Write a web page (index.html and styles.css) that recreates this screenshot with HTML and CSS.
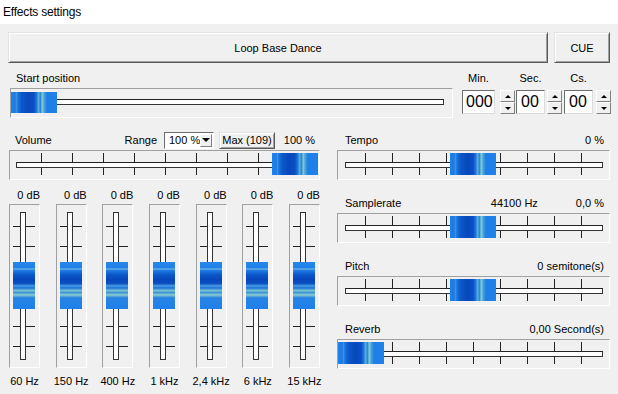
FILE: index.html
```html
<!DOCTYPE html>
<html>
<head>
<meta charset="utf-8">
<title>Effects settings</title>
<link rel="stylesheet" href="styles.css">
</head>
<body>
<div class="titlebar">Effects settings</div>

<div class="top-buttons">
  <button class="btn loop">Loop Base Dance</button>
  <button class="btn cue">CUE</button>
</div>

<div class="start-row">
  <div class="start-col">
    <div class="start-label">Start position</div>
    <div class="slider start-slider">
      <div class="track"></div>
      <div class="thumb t-start"></div>
    </div>
  </div>
  <div class="time">
    <div class="tfield"><div class="tlabel">Min.</div><div class="edit e-min">000</div></div>
    <div class="spin s-min"><div class="spin-btn up"></div><div class="spin-btn down"></div></div>
    <div class="tfield f-sec"><div class="tlabel">Sec.</div><div class="edit e-sec">00</div></div>
    <div class="spin s-sec"><div class="spin-btn up"></div><div class="spin-btn down"></div></div>
    <div class="tfield f-cs"><div class="tlabel">Cs.</div><div class="edit e-cs">00</div></div>
    <div class="spin s-cs"><div class="spin-btn up"></div><div class="spin-btn down"></div></div>
  </div>
</div>

<div class="columns">
  <div class="left-col">
    <div class="hdr vol-hdr">
      <span class="name">Volume</span>
      <span class="range-label">Range</span>
      <div class="combo"><span class="combo-text">100 %</span><span class="combo-btn"></span></div>
      <button class="btn small-btn">Max (109)</button>
      <span class="vol-val">100 %</span>
    </div>
    <div class="slider vol-slider">
      <div class="track"></div>
      <div class="thumb t-vol"></div>
    </div>
    <div class="eq">
      <div class="eq-band"><div class="db">0 dB</div><div class="vslider"><div class="vtrack"></div><div class="vthumb"></div></div><div class="freq">60 Hz</div></div>
      <div class="eq-band"><div class="db">0 dB</div><div class="vslider"><div class="vtrack"></div><div class="vthumb"></div></div><div class="freq">150 Hz</div></div>
      <div class="eq-band"><div class="db">0 dB</div><div class="vslider"><div class="vtrack"></div><div class="vthumb"></div></div><div class="freq">400 Hz</div></div>
      <div class="eq-band"><div class="db">0 dB</div><div class="vslider"><div class="vtrack"></div><div class="vthumb"></div></div><div class="freq">1 kHz</div></div>
      <div class="eq-band"><div class="db">0 dB</div><div class="vslider"><div class="vtrack"></div><div class="vthumb"></div></div><div class="freq">2,4 kHz</div></div>
      <div class="eq-band"><div class="db">0 dB</div><div class="vslider"><div class="vtrack"></div><div class="vthumb"></div></div><div class="freq">6 kHz</div></div>
      <div class="eq-band"><div class="db">0 dB</div><div class="vslider"><div class="vtrack"></div><div class="vthumb"></div></div><div class="freq">15 kHz</div></div>
    </div>
  </div>

  <div class="right-col">
    <div class="section">
      <div class="hdr"><span class="name">Tempo</span><span>0 %</span></div>
      <div class="slider rslider"><div class="track"></div><div class="thumb t-mid"></div></div>
    </div>
    <div class="section">
      <div class="hdr"><span class="name">Samplerate</span><span>44100 Hz</span><span class="pct">0,0 %</span></div>
      <div class="slider rslider"><div class="track"></div><div class="thumb t-mid"></div></div>
    </div>
    <div class="section">
      <div class="hdr"><span class="name">Pitch</span><span>0 semitone(s)</span></div>
      <div class="slider rslider"><div class="track"></div><div class="thumb t-mid"></div></div>
    </div>
    <div class="section">
      <div class="hdr"><span class="name">Reverb</span><span>0,00 Second(s)</span></div>
      <div class="slider rslider"><div class="track"></div><div class="thumb t-left"></div></div>
    </div>
  </div>
</div>
</body>
</html>
```

FILE: styles.css
```css
* { box-sizing: border-box; }
html, body { margin: 0; padding: 0; }
body {
  width: 618px;
  height: 394px;
  overflow: hidden;
  background: #f0f0f0;
  font-family: "Liberation Sans", Arial, sans-serif;
  font-size: 11px;
  color: #000;
}

.titlebar {
  height: 24px;
  background: #fff;
  padding-left: 3px;
  font-size: 12px;
  line-height: 24px;
  letter-spacing: -0.2px;
}

/* classic raised button */
.btn {
  font: inherit;
  color: #000;
  background: #f0f0f0;
  border: 1px solid;
  border-color: #e3e3e3 #5a5a5a #5a5a5a #e3e3e3;
  box-shadow: inset 1px 1px #fff, inset -1px -1px #a0a0a0;
  padding: 0;
  margin: 0;
}

.top-buttons {
  display: flex;
  gap: 6px;
  margin: 8px 0 0 8px;
}
.loop { width: 540px; height: 31px; }
.cue { width: 56px; height: 31px; }

.start-row {
  display: flex;
  margin: 8px 0 0 10px;
}
.start-col { width: 443px; }
.start-label {
  line-height: 14px;
  padding-left: 6px;
  margin-bottom: 3px;
}

/* time edits */
.time {
  display: flex;
  align-items: flex-end;
  margin-left: 9px;
  height: 43px;
}
.tfield {
  display: flex;
  flex-direction: column;
  align-items: center;
}
.tlabel {
  line-height: 14px;
  margin-bottom: 5px;
}
.edit {
  height: 24px;
  background: #fff;
  border: 1px solid;
  border-color: #6e6e6e #dcdcdc #dcdcdc #6e6e6e;
  font-size: 16px;
  line-height: 22px;
  padding-left: 3px;
  white-space: nowrap;
}
.e-min { width: 33px; }
.e-sec { width: 29px; padding-left: 4px; }
.e-cs { width: 29px; padding-left: 4px; }
.s-min { margin-left: 5px; }
.f-sec { margin-left: 1px; }
.s-sec { margin-left: 2px; }
.f-cs { margin-left: 2px; }
.s-cs { margin-left: 3px; }

.spin {
  width: 15px;
  height: 24px;
  display: flex;
  flex-direction: column;
}
.spin-btn {
  flex: 1;
  background: #f0f0f0;
  border: 1px solid;
  border-color: #fff #808080 #808080 #fff;
  display: flex;
  align-items: center;
  justify-content: center;
}
.spin-btn::before {
  content: "";
  border-left: 3px solid transparent;
  border-right: 3px solid transparent;
}
.up::before { border-bottom: 3px solid #000; }
.down::before { border-top: 3px solid #000; }

/* columns */
.columns {
  display: flex;
  gap: 17px;
  margin-top: 13px;
  padding-left: 9px;
}
.left-col { width: 311px; }
.right-col {
  width: 273px;
  display: flex;
  flex-direction: column;
  gap: 14px;
}

.hdr {
  height: 18px;
  display: flex;
  align-items: center;
  padding: 0 6px 0 8px;
  white-space: nowrap;
}
.hdr .name { flex: 1; }
.pct { margin-left: 38px; }

.vol-hdr { padding: 0 5px 0 6px; }
.range-label { margin-right: 7px; }
.combo {
  width: 50px;
  height: 17px;
  background: #fff;
  border: 1px solid;
  border-color: #6e6e6e #fff #fff #6e6e6e;
  display: flex;
  padding: 1px;
}
.combo-text {
  flex: 1;
  padding-left: 3px;
  line-height: 13px;
}
.combo-btn {
  width: 15px;
  background: #f0f0f0;
  border: 1px solid;
  border-color: #fff #808080 #808080 #fff;
  display: flex;
  align-items: center;
  justify-content: center;
}
.combo-btn::before {
  content: "";
  border-left: 4px solid transparent;
  border-right: 4px solid transparent;
  border-top: 4px solid #000;
}
.small-btn {
  width: 56px;
  height: 17px;
  margin-left: 5px;
  line-height: 13px;
}
.vol-val {
  width: 40px;
  text-align: right;
}

/* horizontal sliders */
.slider {
  position: relative;
  height: 30px;
  margin-top: 1px;
  border: 1px solid;
  border-color: #a0a0a0 #fff #fff #a0a0a0;
  display: flex;
  align-items: center;
  background-repeat: no-repeat;
}
.track {
  flex: 1;
  height: 6px;
  border: 1px solid #333;
  border-top-color: #222;
  background: #fff;
}
.start-slider {
  margin-top: 0;
  padding: 0 8px 2px 7px;
}
.vol-slider {
  padding: 0 6px 0 6px;
  background-image: repeating-linear-gradient(to right, #222 0 1px, transparent 1px 31px);
  background-size: 218px 22px;
  background-position: 31px 2px;
}
.rslider {
  padding: 0 6px 0 7px;
  background-image: repeating-linear-gradient(to right, #222 0 1px, transparent 1px 27px);
  background-size: 217px 22px;
  background-position: 27px 2px;
}

.thumb {
  position: absolute;
  top: 2px;
  width: 46px;
  height: 22px;
  background: linear-gradient(to right,
    #1f82ea 0%, #1c7ae4 9%, #3a92e2 12%, #1a74e0 15%,
    #0c58c8 23%, #0848bc 38%, #0a4fc4 50%, #1f78dc 56%,
    #5aaed8 60%, #2a86dc 64%, #86cdca 68%, #4aa2dc 72%,
    #1e7ee6 78%, #1f82ea 100%);
}
.t-start { left: 0; top: 3px; height: 21px; }
.t-vol { left: 262px; }
.t-mid { left: 112px; }
.t-left { left: 0; }

/* equalizer */
.eq {
  display: flex;
  justify-content: space-between;
  margin-top: 8px;
}
.eq-band {
  width: 31px;
  display: flex;
  flex-direction: column;
}
.db {
  line-height: 14px;
  text-align: right;
  white-space: nowrap;
  margin-bottom: 2px;
}
.vslider {
  position: relative;
  height: 164px;
  border: 1px solid;
  border-color: #a0a0a0 #fff #fff #a0a0a0;
  padding: 7px 0 7px 10px;
  display: flex;
  background-image: repeating-linear-gradient(to bottom, #222 0 1px, transparent 1px 20px);
  background-size: 22px 121px;
  background-position: 3px 21px;
  background-repeat: no-repeat;
}
.vtrack {
  width: 6px;
  border: 1px solid #333;
  background: #fff;
}
.vthumb {
  position: absolute;
  left: 3px;
  top: 57px;
  width: 22px;
  height: 47px;
  background: linear-gradient(to bottom,
    #2888ea 0%, #1e80e8 12%, #6ab4e2 15%, #1e7ce6 18%,
    #0c58c8 27%, #0646bc 38%, #0c52c4 46%, #4c9ee0 51%,
    #1a72dc 55%, #7cc4cc 61%, #3a94dc 65%, #8ccccc 70%,
    #2884e4 76%, #1e80ea 100%);
}
.freq {
  margin: 6px -12px 0;
  line-height: 14px;
  text-align: center;
  white-space: nowrap;
}
```
